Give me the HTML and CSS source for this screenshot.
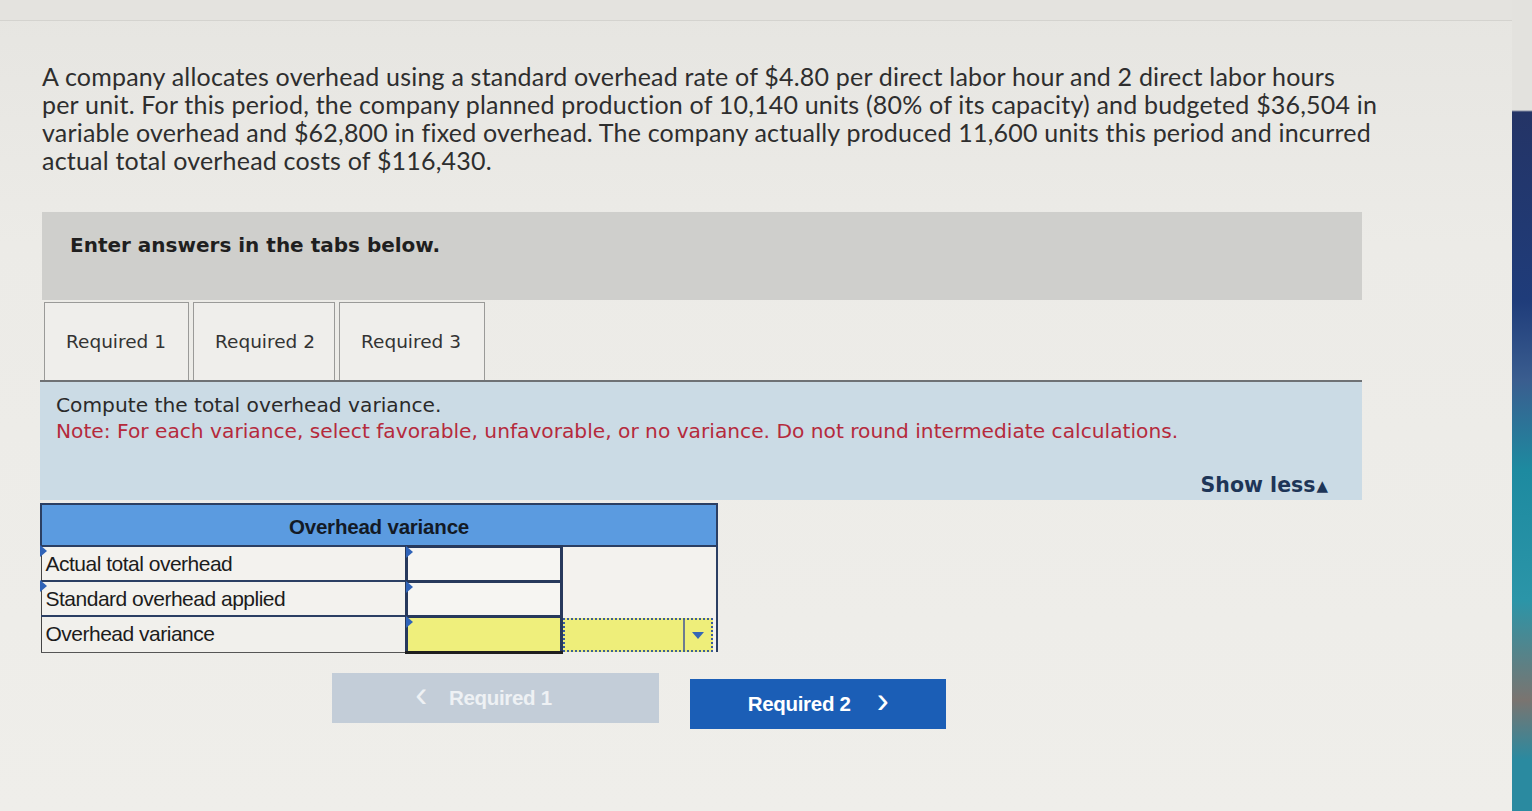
FILE: index.html
```html
<!DOCTYPE html>
<html lang="en">
<head>
<meta charset="utf-8">
<title>Overhead variance</title>
<link rel="stylesheet" href="styles.css">
</head>
<body>
<div class="screen">
  <div class="display">
    <div class="topline"></div>
    <main class="page">
      <p class="question">A company allocates overhead using a standard overhead rate of $4.80 per direct labor hour and 2 direct labor hours<br>per unit. For this period, the company planned production of 10,140 units (80% of its capacity) and budgeted $36,504 in<br>variable overhead and $62,800 in fixed overhead. The company actually produced 11,600 units this period and incurred<br>actual total overhead costs of $116,430.</p>

      <div class="enter">Enter answers in the tabs below.</div>

      <div class="tabs">
        <div class="tab">Required 1</div>
        <div class="tab">Required 2</div>
        <div class="tab">Required 3</div>
      </div>

      <div class="panel">
        <p class="instr">Compute the total overhead variance.</p>
        <p class="note">Note: For each variance, select favorable, unfavorable, or no variance. Do not round intermediate calculations.</p>
        <div class="showless">Show less<span class="tri">&#9650;</span></div>
      </div>

      <table class="grid">
        <colgroup>
          <col class="c1">
          <col class="c2">
          <col class="c3">
        </colgroup>
        <thead>
          <tr><th colspan="3">Overhead variance</th></tr>
        </thead>
        <tbody>
          <tr>
            <td class="label mark">Actual total overhead</td>
            <td class="inp mark"></td>
            <td class="blank"></td>
          </tr>
          <tr>
            <td class="label mark">Standard overhead applied</td>
            <td class="inp mark"></td>
            <td class="blank"></td>
          </tr>
          <tr>
            <td class="label">Overhead variance</td>
            <td class="inp yellow mark"></td>
            <td class="select">
              <div class="selbox"><span class="selfill"></span><span class="arrow"></span></div>
            </td>
          </tr>
        </tbody>
      </table>

      <div class="nav">
        <div class="btn prev"><span class="chev">&lsaquo;</span><span>Required 1</span></div>
        <div class="btn next"><span>Required 2</span><span class="chev">&rsaquo;</span></div>
      </div>
    </main>
  </div>
  <div class="edge"></div>
</div>
</body>
</html>
```

FILE: styles.css
```css
html, body {
  margin: 0;
  padding: 0;
}

body {
  width: 1532px;
  height: 811px;
  overflow: hidden;
  background: #e8e7e3;
}

.screen {
  display: flex;
  width: 1532px;
  height: 811px;
}

.display {
  flex: 1;
  background: linear-gradient(180deg, #e6e5e1 0%, #ecebe7 30%, #efeeea 100%);
}

.topline {
  height: 20px;
  border-bottom: 1px solid #d4d3cf;
  background: #e4e3df;
}

.page {
  padding: 0 0 0 40px;
  width: 1322px;
}

.question {
  margin: 41px 0 0 2px;
  font-family: Lato, "Liberation Sans", sans-serif;
  font-size: 25px;
  line-height: 28px;
  color: #2e2e2e;
  letter-spacing: 0.2px;
  white-space: nowrap;
}

.enter {
  margin-top: 38px;
  margin-left: 2px;
  height: 88px;
  padding: 21px 0 0 28px;
  box-sizing: border-box;
  background: #cfcfcc;
  font-family: "DejaVu Sans", Verdana, sans-serif;
  font-weight: bold;
  font-size: 20px;
  color: #1f1f1f;
}

.tabs {
  display: flex;
  gap: 4px;
  margin-top: 0;
  padding-top: 2px;
  margin-left: 4px;
}

.tab {
  height: 78px;
  box-sizing: border-box;
  padding: 0 0 0 21px;
  display: flex;
  align-items: center;
  border: 1px solid #9a9a98;
  border-bottom: none;
  background: #efeeeb;
  font-family: "DejaVu Sans", Verdana, sans-serif;
  font-size: 18.5px;
  color: #333;
}

.tab:nth-child(1) { width: 145px; }
.tab:nth-child(2) { width: 142px; }
.tab:nth-child(3) { width: 146px; }

.panel {
  position: relative;
  height: 120px;
  box-sizing: border-box;
  padding: 10px 0 0 16px;
  border-top: 2px solid #6f7275;
  background: #cbdbe5;
  font-family: "DejaVu Sans", Verdana, sans-serif;
  font-size: 20.2px;
}

.instr {
  margin: 0;
  line-height: 26px;
  color: #2a2a2a;
}

.note {
  margin: 0;
  line-height: 26px;
  color: #b52a3c;
}

.showless {
  position: absolute;
  right: 34px;
  bottom: 3px;
  font-weight: bold;
  color: #1e3557;
  font-size: 20.5px;
}

.tri {
  font-size: 15px;
  margin-left: 1px;
  vertical-align: 1px;
}

.grid {
  margin-top: 3px;
  width: 676px;
  border-collapse: collapse;
  font-family: "Liberation Sans", Arial, sans-serif;
  font-size: 21px;
  color: #1c1c1c;
  table-layout: fixed;
}

.c1 { width: 365px; }
.c2 { width: 155px; }
.c3 { width: 156px; }

.grid th {
  height: 42px;
  padding: 4px 0 0;
  box-sizing: border-box;
  background: #5b9be0;
  border: 2px solid #2b3f63;
  font-weight: bold;
  font-size: 20.5px;
  text-align: center;
  color: #131a26;
  letter-spacing: -0.2px;
}

.grid td {
  height: 35px;
  padding: 0;
  box-sizing: border-box;
  position: relative;
}

.grid td.label {
  padding-left: 4px;
  border: 2px solid #2b3f63;
  border-left: 1px solid #444;
  background: #f3f2ee;
  letter-spacing: -0.5px;
  white-space: nowrap;
}

.grid tbody tr:nth-child(3) td.label {
  border-bottom: 1px solid #555;
  background: #f1f0ec;
}

.grid td.inp {
  border: 3px solid #27395c;
  background: #f6f5f2;
}

.grid td.yellow {
  background: #efef7c;
  border-bottom-color: #1f1f1f;
}

.grid td.blank {
  border-left: 2px solid #2b3f63;
  border-right: 2px solid #2b3f63;
  background: #f3f2ee;
}

.grid td.select {
  border-left: 2px solid #2b3f63;
  border-right: 2px solid #2b3f63;
  padding: 2px 3px 0 0;
  background: #f3f2ee;
    vertical-align: top;
}

.selbox {
  display: flex;
  height: 34px;
  box-sizing: border-box;
  border: 2px dotted #3b5e9c;
  background: #eeee7a;
}

.selfill {
  flex: 1;
}

.arrow {
  width: 26px;
  border-left: 2px solid #6d7b8f;
  display: flex;
  align-items: center;
  justify-content: center;
}

.arrow::after {
  content: "";
  width: 0;
  height: 0;
  border-left: 6px solid transparent;
  border-right: 6px solid transparent;
  border-top: 7px solid #3567b5;
}

.mark::before {
  content: "";
  position: absolute;
  left: -2px;
  top: -2px;
  width: 0;
  height: 0;
  border-top: 6px solid transparent;
  border-bottom: 6px solid transparent;
  border-left: 7px solid #2f63b8;
}

.nav {
  display: flex;
  gap: 31px;
  margin: 19px 0 0 292px;
}

.btn {
  height: 50px;
  display: flex;
  align-items: center;
  justify-content: center;
  font-family: "Liberation Sans", Arial, sans-serif;
  font-weight: bold;
  font-size: 20.5px;
  color: #fff;
  letter-spacing: -0.3px;
}

.btn .chev {
  font-size: 36px;
  font-weight: normal;
  line-height: 1;
  margin-top: -5px;
}

.prev {
  width: 327px;
  background: #c3cdd8;
  color: #eef1f4;
  gap: 22px;
  padding-right: 24px;
  box-sizing: border-box;
}

.next {
  width: 256px;
  margin-top: 6px;
  background: #1b5eb6;
  gap: 26px;
  box-sizing: border-box;
}

.edge {
  width: 20px;
  background: linear-gradient(180deg, #e3e2de 0px, #e3e2de 110px, #243466 112px, #1f3c7a 300px, #3a5d8f 380px, #1d8aa0 470px, #2b95a8 600px, #7a7470 700px, #2a8aa0 760px);
}
```
